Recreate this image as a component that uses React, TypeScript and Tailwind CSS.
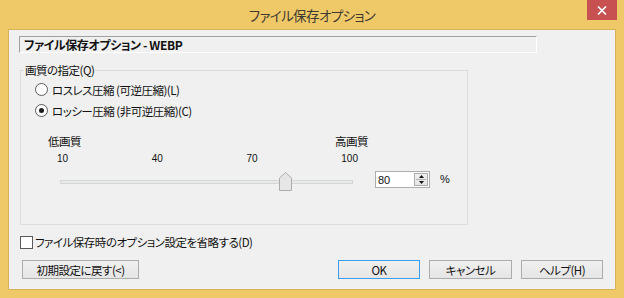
import React from "react";

const jp = "[font-family:'Noto_Sans_CJK_JP',sans-serif] [font-feature-settings:'palt']";
const num = "[font-family:'Liberation_Sans',sans-serif]";
const body = "text-[11.5px] leading-[16px] tracking-[-0.5px] text-[#111]";

function Radio({ checked }: { checked?: boolean }) {
  return (
    <div className="w-[13px] h-[13px] rounded-full border border-[#5a5a5a] bg-white flex items-center justify-center shrink-0">
      {checked && <div className="w-[5px] h-[5px] rounded-full bg-[#1c1c1c]" />}
    </div>
  );
}

function Button({ label, def, w }: { label: string; def?: boolean; w: string }) {
  return (
    <div
      className={`${w} h-[19px] flex items-center justify-center ${body} bg-gradient-to-b from-[#f0f0f0] to-[#e5e5e5] border ${
        def ? "border-[#3c9df0]" : "border-[#acacac]"
      }`}
    >
      {label}
    </div>
  );
}

export default function App() {
  return (
    <div className={`w-[624px] h-[298px] bg-[#efc868] flex flex-col ${jp}`}>
      {/* title bar */}
      <div className="relative h-[29px] flex items-center justify-center">
        <span className="text-[13.5px] leading-[18px] tracking-[-0.6px] text-[#3f3a30] mt-[1px]">ファイル保存オプション</span>
        <div className="absolute top-0 right-[7px] w-[30px] h-[20px] bg-[#c75050] flex items-center justify-center">
          <svg width="10" height="9" viewBox="0 0 10 9">
            <path d="M1 0.5 L9 8.5 M9 0.5 L1 8.5" stroke="white" strokeWidth="1.7" />
          </svg>
        </div>
      </div>

      {/* client */}
      <div className="mx-[8px] mb-[8px] flex-1 bg-[#f0f0f0] border border-[#d8b25a] flex flex-col">
        {/* header */}
        <div className="ml-[10px] mt-[6px] w-[518px] h-[17px] border-t border-l border-t-[#a0a0a0] border-l-[#a0a0a0] border-b border-r border-b-white border-r-white flex items-center pl-[4px]">
          <span className="text-[12px] leading-[14px] tracking-[-0.4px] font-bold text-[#111]">ファイル保存オプション - WEBP</span>
        </div>

        {/* group */}
        <div className="relative ml-[11px] mt-[17px] w-[448px] h-[155px] border border-[#dcdcdc] flex flex-col">
          <span className={`absolute top-[-9px] left-[3px] px-[1px] bg-[#f0f0f0] ${body}`}>画質の指定(Q)</span>

          <div className="pt-[8px] pl-[14px] flex flex-col">
            <div className="h-[21px] flex items-center gap-[4px]">
              <Radio />
              <span className={body}>ロスレス圧縮 (可逆圧縮)(L)</span>
            </div>
            <div className="h-[21px] flex items-center gap-[4px]">
              <Radio checked />
              <span className={body}>ロッシー圧縮 (非可逆圧縮)(C)</span>
            </div>
          </div>

          <div className={`mt-[12px] ml-[27px] w-[320px] h-[16px] flex justify-between items-center ${body}`}>
            <span>低画質</span>
            <span>高画質</span>
          </div>

          <div className={`mt-[4px] ml-[36px] w-[301px] h-[12px] flex justify-between items-center text-[10px] leading-[12px] text-[#111] ${num}`}>
            <span>10</span>
            <span>40</span>
            <span>70</span>
            <span>100</span>
          </div>

          <div className="mt-[6px] ml-[39px] flex items-start">
            <div className="relative w-[293px] h-[20px]">
              <div className="mt-[9px] h-[4px] w-full border border-[#d6d6d6] bg-[#e7eaea]" />
              <svg className="absolute left-[219px] top-[1px]" width="13" height="19" viewBox="0 0 13 19">
                <path d="M0.5 6 L6.5 0.5 L12.5 6 L12.5 18.5 L0.5 18.5 Z" fill="#e6e6e6" stroke="#acacac" />
              </svg>
            </div>
            <div className="ml-[22px] w-[55px] h-[17px] border border-[#abadb3] bg-white flex items-center">
              <span className={`ml-[2px] flex-1 text-[11px] leading-[14px] text-[#111] ${num}`}>80</span>
              <div className="mr-[1px] w-[14px] h-[13px] border border-[#acacac] bg-gradient-to-b from-[#f0f0f0] to-[#e5e5e5] flex flex-col items-center justify-around">
                <svg width="5" height="3" viewBox="0 0 5 3">
                  <path d="M0 3 L2.5 0 L5 3 Z" fill="#111" />
                </svg>
                <div className="w-[10px] h-px bg-[#b5b5b5]" />
                <svg width="5" height="3" viewBox="0 0 5 3">
                  <path d="M0 0 L2.5 3 L5 0 Z" fill="#111" />
                </svg>
              </div>
            </div>
            <span className={`ml-[10px] mt-[1px] text-[11px] leading-[14px] text-[#111] ${num}`}>%</span>
          </div>
        </div>

        {/* checkbox */}
        <div className="mt-[9px] ml-[11px] h-[16px] flex items-center gap-[2px]">
          <div className="w-[13px] h-[13px] border border-[#5a5a5a] bg-white shrink-0" />
          <span className={body}>ファイル保存時のオプション設定を省略する(D)</span>
        </div>

        {/* buttons */}
        <div className="mt-[10px] flex items-center justify-between pl-[13px] pr-[12px]">
          <Button label="初期設定に戻す(<)" w="w-[117px]" />
          <div className="flex gap-[9px]">
            <Button label="OK" def w="w-[82px]" />
            <Button label="キャンセル" w="w-[83px]" />
            <Button label="ヘルプ(H)" w="w-[82px]" />
          </div>
        </div>
      </div>
    </div>
  );
}
